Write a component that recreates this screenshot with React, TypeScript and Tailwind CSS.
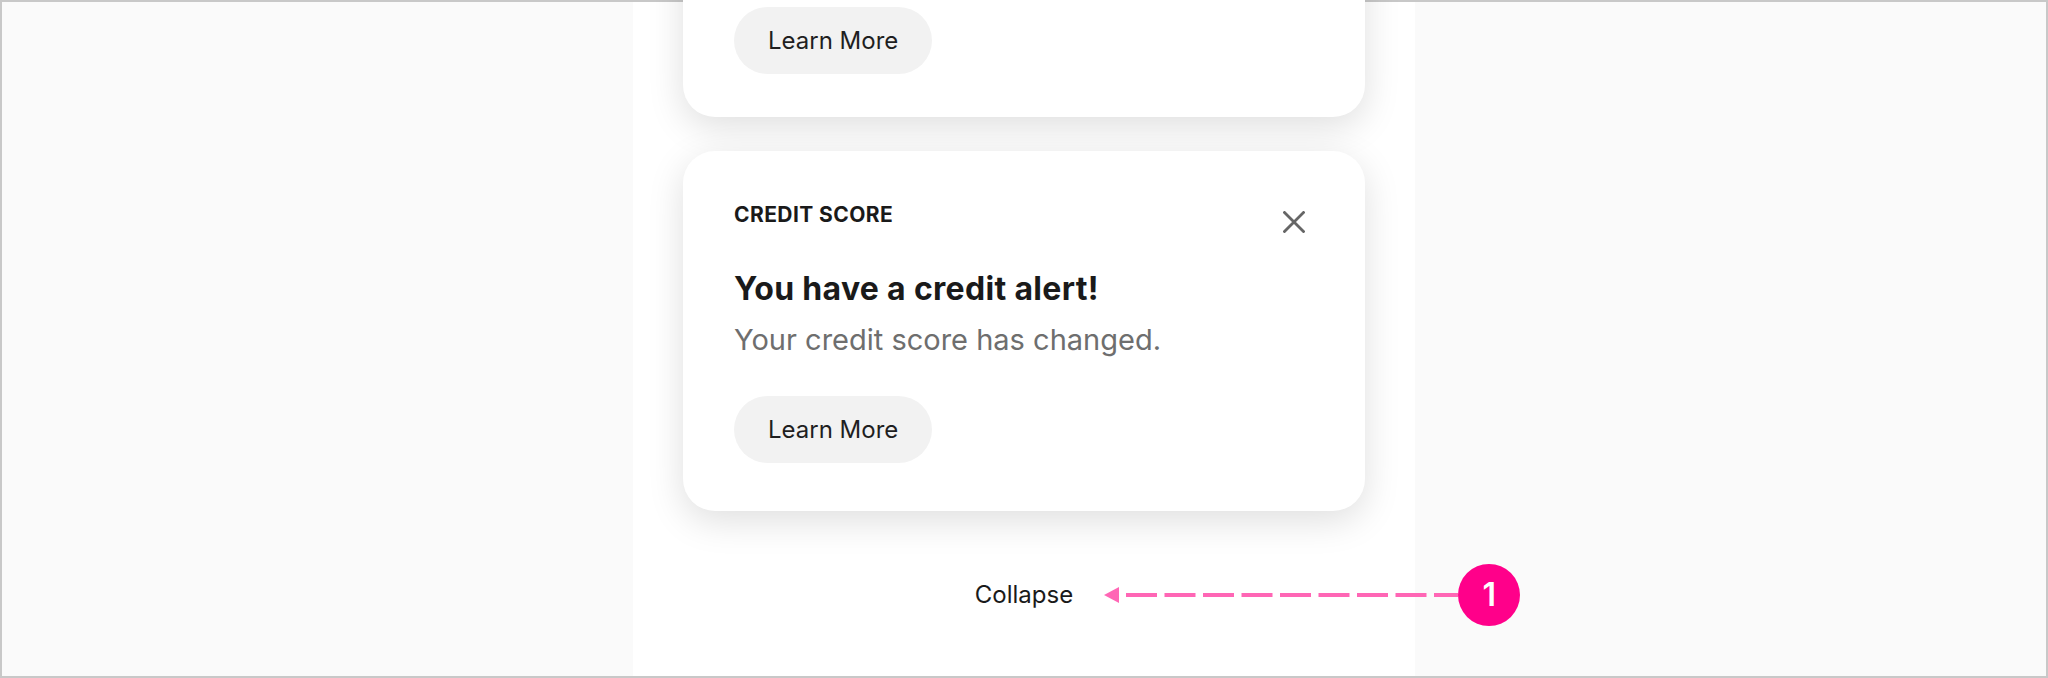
import type { ReactNode } from "react";

type AlertCardProps = {
    label: string;
    title: string;
    body: string;
    bottomPad: string;
    dismissible?: boolean;
};

function CloseIcon() {
    return (
        <svg width="22" height="22" viewBox="0 0 22 22" className="mt-[11px] mr-[9px] shrink-0">
            <path d="M1.5 1.5 L20.5 20.5 M20.5 1.5 L1.5 20.5" stroke="#666666" strokeWidth="2.8" strokeLinecap="square" />
        </svg>
    );
}

function AlertCard({ label, title, body, bottomPad, dismissible = true }: AlertCardProps) {
    return (
        <div
            className={`rounded-[32px] bg-white px-[51px] pt-[49px] shadow-[0_10px_36px_rgba(0,0,0,0.13)] ${bottomPad}`}
        >
            <div className="flex items-start justify-between">
                <div className="text-[21px] leading-[30px] font-bold tracking-[0.02em] text-[#1a1a1a]">{label}</div>
                {dismissible ? <CloseIcon /> : null}
            </div>
            <div className="mt-[36px] text-[32px] leading-[40px] font-bold tracking-[0.01em] text-[#1a1a1a]">{title}</div>
            <div className="mt-[13px] text-[29px] leading-[36px] text-[#6e6e6e]">{body}</div>
            <button
                type="button"
                className="mt-[38px] h-[67px] rounded-full bg-[#f2f2f2] px-[34px] text-[24px] leading-[32px] text-[#1f1f1f]"
            >
                Learn More
            </button>
        </div>
    );
}

function Callout({ children }: { children: ReactNode }) {
    return (
        <div className="absolute left-full top-1/2 ml-[31px] flex -translate-y-1/2 items-center">
            <svg width="354" height="16" viewBox="0 0 354 16" className="shrink-0">
                <polygon points="0,8 15,0 15,16" fill="#ff66b5" />
                <line x1="22" y1="8" x2="354" y2="8" stroke="#ff66b5" strokeWidth="4" strokeDasharray="31 7.5" />
            </svg>
            <div className="flex h-[62px] w-[62px] shrink-0 items-center justify-center rounded-full bg-[#ff008a] text-[32px] font-semibold text-white">
                {children}
            </div>
        </div>
    );
}

export default function App() {
    return (
        <div
            className="flex h-[678px] w-full justify-center border-2 border-[#c8c8c8] bg-[#fafafa]"
            style={{ fontFamily: "Inter, 'Noto Sans', sans-serif" }}
        >
            <div className="flex h-full w-[782px] flex-col justify-end bg-white px-[50px] pb-[65px]">
                <AlertCard
                    label="SAVINGS GOAL"
                    title="You reached a milestone!"
                    body="Your savings goal is halfway there."
                    bottomPad="pb-[43px]"
                />
                <div className="mt-[34px]">
                    <AlertCard
                        label="CREDIT SCORE"
                        title="You have a credit alert!"
                        body="Your credit score has changed."
                        bottomPad="pb-[48px]"
                    />
                </div>
                <div className="mt-[68px] flex justify-center">
                    <span className="relative text-[24px] leading-[32px] text-[#1a1a1a]">
                        Collapse
                        <Callout>1</Callout>
                    </span>
                </div>
            </div>
        </div>
    );
}
